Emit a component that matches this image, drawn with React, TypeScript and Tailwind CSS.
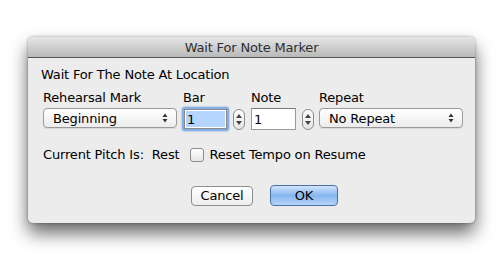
import React from "react";

const font = { fontFamily: '"DejaVu Sans", "Liberation Sans", sans-serif', letterSpacing: "-0.17px" };

function UpDown({ className = "" }: { className?: string }) {
  return (
    <svg width="6" height="10" viewBox="0 0 6 10" className={className}>
      <path d="M3 0.5 L5.5 4 L0.5 4 Z" fill="#333" />
      <path d="M3 9.5 L5.5 6 L0.5 6 Z" fill="#333" />
    </svg>
  );
}

function Popup({ label, width }: { label: string; width: string }) {
  return (
    <div
      className={`${width} h-[20px] rounded-[4px] border border-[#9a9a9a] bg-gradient-to-b from-[#ffffff] to-[#ececec] flex items-center pl-[9px] pr-[8px] shadow-[0_1px_0_rgba(0,0,0,0.08)]`}
    >
      <span className="flex-1 text-[13px] text-black leading-none">{label}</span>
      <UpDown />
    </div>
  );
}

function Stepper() {
  return (
    <div className="w-[12px] h-[21px] rounded-[6px] border border-[#8d8d8d] bg-gradient-to-b from-[#ffffff] to-[#e4e4e4] flex flex-col items-center justify-center gap-[3px]">
      <svg width="6" height="4" viewBox="0 0 6 4">
        <path d="M3 0 L6 4 L0 4 Z" fill="#444" />
      </svg>
      <svg width="6" height="4" viewBox="0 0 6 4">
        <path d="M3 4 L6 0 L0 0 Z" fill="#444" />
      </svg>
    </div>
  );
}

export default function App() {
  return (
    <div className="w-[503px] h-[260px] bg-white pt-[37px] pl-[28px]" style={font}>
      <div className="w-[447px] h-[186px] bg-[#ececec] rounded-[5px] shadow-[0_10px_18px_rgba(0,0,0,0.6),0_0_3px_rgba(0,0,0,0.35)] flex flex-col overflow-hidden">
        <div className="h-[21px] bg-gradient-to-b from-[#e6e6e6] to-[#b9b9b9] border-b border-[#555] flex items-center justify-center">
          <span className="text-[13px] text-[#2e2e2e] leading-none">Wait For Note Marker</span>
        </div>
        <div className="flex flex-col pl-[13px]">
          <div className="mt-[9px] text-[13px] leading-[16px] text-black">Wait For The Note At Location</div>
          <div className="mt-[7px] flex">
            <div className="flex flex-col ml-[2px]">
              <span className="text-[13px] leading-[16px] text-black">Rehearsal Mark</span>
              <div className="mt-[2px]">
                <Popup label="Beginning" width="w-[134px]" />
              </div>
            </div>
            <div className="flex flex-col ml-[5px]">
              <span className="text-[13px] leading-[16px] text-black ml-[1px]">Bar</span>
              <div className="mt-[1px] flex items-center">
                <div className="w-[47px] h-[24px] rounded-[3px] bg-[#83aee6] p-[2px] shadow-[0_0_2px_#6c9ad6]">
                  <div className="w-full h-full bg-white border border-[#8a8a8a] p-[1px]">
                    <div className="w-full h-full bg-[#b5d5ff] flex items-center pl-[1px] text-[13px] leading-none text-black">
                      1
                    </div>
                  </div>
                </div>
                <div className="ml-[4px]">
                  <Stepper />
                </div>
              </div>
            </div>
            <div className="flex flex-col ml-[6px]">
              <span className="text-[13px] leading-[16px] text-black">Note</span>
              <div className="mt-[2px] flex items-center">
                <div className="w-[45px] h-[22px] bg-white border border-[#9a9a9a] border-t-[#7a7a7a] flex items-center pl-[2px] text-[13px] leading-none text-black">
                  1
                </div>
                <div className="ml-[6px]">
                  <Stepper />
                </div>
              </div>
            </div>
            <div className="flex flex-col ml-[5px]">
              <span className="text-[13px] leading-[16px] text-black">Repeat</span>
              <div className="mt-[2px]">
                <Popup label="No Repeat" width="w-[144px]" />
              </div>
            </div>
          </div>
          <div className="mt-[16px] flex items-center ml-[2px] h-[16px]">
            <span className="text-[13px] leading-[16px] text-black">Current Pitch Is:</span>
            <span className="text-[13px] leading-[16px] text-black ml-[8px]">Rest</span>
            <div className="ml-[11px] w-[14px] h-[14px] rounded-[3px] border border-[#8d8d8d] bg-gradient-to-b from-[#ffffff] to-[#e6e6e6]" />
            <span className="text-[13px] leading-[16px] text-black ml-[5px]">Reset Tempo on Resume</span>
          </div>
          <div className="mt-[22px] flex items-center">
            <div className="ml-[150px] w-[62px] h-[20px] rounded-[4px] border border-[#8e8e8e] bg-gradient-to-b from-[#ffffff] to-[#ededed] flex items-center justify-center text-[13px] leading-none text-black">
              Cancel
            </div>
            <div className="ml-[17px] w-[68px] h-[21px] rounded-[4px] border border-[#4d6fa8] bg-gradient-to-b from-[#d2e5fb] via-[#86b6ef] to-[#b4d6f8] flex items-center justify-center text-[13px] leading-none text-black">
              OK
            </div>
          </div>
        </div>
      </div>
    </div>
  );
}
